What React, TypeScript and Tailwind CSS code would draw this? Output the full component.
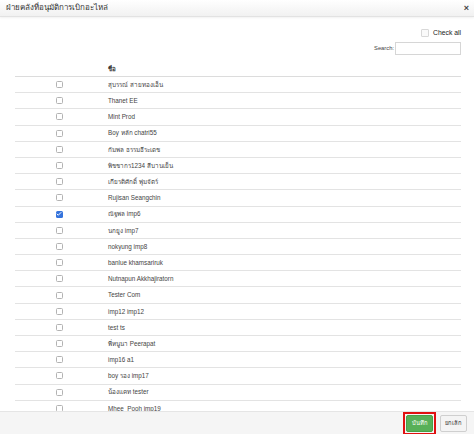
import { Check } from "lucide-react";

const NAMES = [
  "สุบรรณ์ สายทองเอ็น",
  "Thanet EE",
  "Mint Prod",
  "Boy หลัก chatri55",
  "กัมพล ธรรมธีระเดช",
  "พิชชากร1234 สีบานเย็น",
  "เกียรติศักดิ์ พุ่มจัตร์",
  "Rujisan Seangchin",
  "ณัฐพล imp6",
  "นกยูง imp7",
  "nokyung imp8",
  "banlue khamsariruk",
  "Nutnapun Akkhajiratorn",
  "Tester Com",
  "imp12 imp12",
  "test ts",
  "พี่หนูนา Peerapat",
  "imp16 a1",
  "boy รอง imp17",
  "น้องแคท tester",
  "Mhee_Pooh imp19",
];

const CHECKED = 8;

function Box({ on }: { on: boolean }) {
  if (on) {
    return (
      <span className="flex items-center justify-center w-[7px] h-[7px] rounded-[1.5px] bg-[#3573dc]">
        <Check className="w-[6px] h-[6px] text-white" strokeWidth={4} />
      </span>
    );
  }
  return <span className="block w-[7px] h-[7px] rounded-[1.5px] border border-[#b3b3b3] bg-white" />;
}

export default function App() {
  return (
    <div
      className="w-[474px] h-[434px] flex flex-col bg-white text-[#333] overflow-hidden"
      style={{ fontFamily: '"Liberation Sans", "Noto Sans", sans-serif' }}
    >
      <div className="h-[17px] shrink-0 flex items-center justify-between pl-[6px] pr-[5px] bg-gradient-to-b from-white to-[#f1f1f1] border-b border-[#e2e2e2] shadow-[0_1px_2px_rgba(0,0,0,0.06)]">
        <span className="text-[8px] text-[#333]">ฝ่ายคลังที่อนุมัติการเบิกอะไหล่</span>
        <span className="text-[9px] font-bold text-[#444] leading-none">×</span>
      </div>

      <div className="flex-1 min-h-0 overflow-hidden pl-[15px] pr-[13px]">
        <div className="flex justify-end items-center gap-[4px] mt-[12px] h-[8px]">
          <span className="block w-[8px] h-[8px] rounded-[1px] border border-[#d8d8d8] bg-[#fafafa]" />
          <span className="text-[6.8px] text-[#222]">Check all</span>
        </div>
        <div className="flex justify-end items-center gap-[1px] mt-[5px]">
          <span className="text-[5.8px] text-[#444]">Search:</span>
          <span className="block w-[66px] h-[13px] border border-[#d6d6d6] bg-white" />
        </div>

        <div className="mt-[6px]">
          <div className="flex items-center h-[16px] border-b border-[#dcdcdc]">
            <div className="w-[88px]" />
            <div className="pl-[5px] text-[6.2px] font-bold text-[#333]">ชื่อ</div>
          </div>
          {NAMES.map((n, i) => (
            <div key={n} className="flex items-center h-[16.2px] border-b border-[#e3e3e3]">
              <div className="w-[88px] flex justify-center">
                <Box on={i === CHECKED} />
              </div>
              <div className="pl-[5px] text-[6.3px] text-[#444]">{n}</div>
            </div>
          ))}
        </div>
      </div>

      <div className="h-[23px] shrink-0 flex items-center justify-end gap-[4px] pr-[7px] bg-[#f5f5f5] border-t border-[#e5e5e5]">
        <div className="p-[1px] border-2 border-[#e01010]">
          <div className="w-[27px] h-[17px] flex items-center justify-center rounded-[2px] bg-[#58b058] border border-[#47a047] text-white text-[5.8px]">
            บันทึก
          </div>
        </div>
        <div className="w-[27px] h-[17px] flex items-center justify-center rounded-[2px] bg-[#f4f4f4] border border-[#cfcfcf] text-[#333] text-[5.8px]">
          ยกเลิก
        </div>
      </div>
    </div>
  );
}
